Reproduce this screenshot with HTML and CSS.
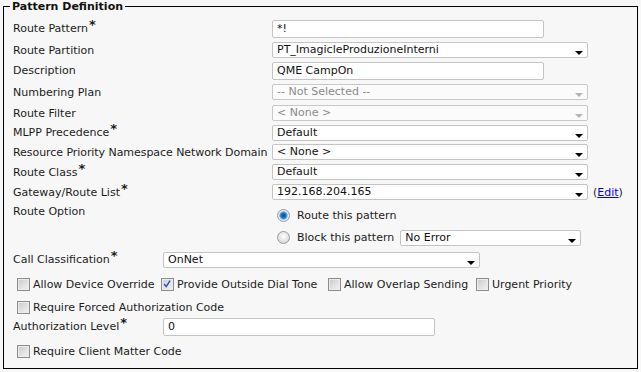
FILE: index.html
```html
<!DOCTYPE html>
<html>
<head>
<meta charset="utf-8">
<link rel="stylesheet" href="styles.css">
</head>
<body>
<fieldset class="pattern">
  <legend>Pattern Definition</legend>
  <div class="content">
    <div class="main">
      <div class="lbl">Route Pattern<span class="req">*</span></div>
      <div class="cell"><span class="txt w272">*!</span></div>

      <div class="lbl">Route Partition</div>
      <div class="cell"><span class="sel w316">PT_ImagicleProduzioneInterni</span></div>

      <div class="lbl">Description</div>
      <div class="cell"><span class="txt w272">QME CampOn</span></div>

      <div class="lbl">Numbering Plan</div>
      <div class="cell"><span class="sel w316 dis">-- Not Selected --</span></div>

      <div class="lbl">Route Filter</div>
      <div class="cell"><span class="sel w316 dis">&lt; None &gt;</span></div>

      <div class="lbl">MLPP Precedence<span class="req">*</span></div>
      <div class="cell"><span class="sel w316">Default</span></div>

      <div class="lbl tight">Resource Priority Namespace Network Domain</div>
      <div class="cell"><span class="sel w316">&lt; None &gt;</span></div>

      <div class="lbl">Route Class<span class="req">*</span></div>
      <div class="cell"><span class="sel w316">Default</span></div>

      <div class="lbl">Gateway/Route List<span class="req">*</span></div>
      <div class="cell"><span class="sel w316">192.168.204.165</span><span class="edit">(<a href="#">Edit</a>)</span></div>
    </div>

    <div class="options">
      <div class="lbl top">Route Option</div>
      <div class="radios">
        <div class="ropt r1"><span class="radio on"></span><span class="rtext">Route this pattern</span></div>
        <div class="ropt r2"><span class="radio"></span><span class="rtext">Block this pattern</span><span class="sel w181">No Error</span></div>
      </div>
    </div>

    <div class="lower">
      <div class="lbl">Call Classification<span class="req">*</span></div>
      <div class="cell"><span class="sel w317">OnNet</span></div>
    </div>

    <div class="checks">
      <div class="chk"><span class="cb"></span>Allow Device Override</div>
      <div class="chk"><span class="cb on"><svg viewBox="0 0 13 13" width="11" height="11"><path d="M2.5 6 L5 9 L9.5 2" fill="none" stroke="#2b4fa8" stroke-width="1.7"/></svg></span>Provide Outside Dial Tone</div>
      <div class="chk"><span class="cb"></span>Allow Overlap Sending</div>
      <div class="chk"><span class="cb"></span>Urgent Priority</div>
    </div>

    <div class="single s1"><div class="chk"><span class="cb"></span>Require Forced Authorization Code</div></div>

    <div class="lower auth">
      <div class="lbl">Authorization Level<span class="req">*</span></div>
      <div class="cell"><span class="txt w272">0</span></div>
    </div>

    <div class="single s2"><div class="chk"><span class="cb"></span>Require Client Matter Code</div></div>
  </div>
</fieldset>
</body>
</html>
```

FILE: styles.css
```css
html, body {
  margin: 0;
  background: #f7f7f7;
}
body {
  font-family: "DejaVu Sans", Verdana, sans-serif;
  font-size: 11px;
  color: #1c1c1c;
  line-height: 13px;
}
.pattern {
  margin: 0 3px;
  padding: 0 0 3px 0;
  border: 1px solid #000;
  min-width: 0;
}
.pattern legend {
  font-weight: bold;
  padding: 0 2px;
  margin-left: 6px;
  line-height: 13px;
  color: #111;
}
.content {
  padding: 4px 0 0 9px;
}
.main {
  display: grid;
  grid-template-columns: 259px auto;
  grid-template-rows: 23px 20px 21px 22px 20px 19px 20px 20px 20px;
  align-items: center;
}
.lbl {
  white-space: nowrap;
}
.lbl.tight {
  letter-spacing: -0.06px;
}
.req {
  font-weight: bold;
  font-size: 13px;
  vertical-align: 3px;
  line-height: 0;
  margin-left: 1px;
}
.cell {
  display: flex;
  align-items: center;
}
.txt, .sel {
  box-sizing: border-box;
  display: block;
  background: #fff;
  border: 1px solid #c4c4c4;
  border-radius: 2px;
  padding: 0 4px;
  white-space: nowrap;
  color: #111;
}
.txt {
  height: 18px;
  line-height: 16px;
}
.sel {
  height: 16px;
  line-height: 14px;
  position: relative;
}
.sel::after {
  content: "";
  position: absolute;
  right: 4px;
  top: 8px;
  border-left: 4px solid transparent;
  border-right: 4px solid transparent;
  border-top: 4px solid #000;
}
.sel.dis {
  color: #8a8a8a;
  background: #fbfbfb;
  border-color: #c8c8c8;
}
.sel.dis::after {
  border-top-color: #b5b5b5;
}
.w272 { width: 272px; }
.w316 { width: 316px; }
.w317 { width: 317px; }
.w181 { width: 181px; }
.edit {
  margin-left: 5px;
  color: #1c1c1c;
}
.edit a {
  color: #0000ee;
  text-decoration: underline;
}
.options {
  display: grid;
  grid-template-columns: 259px auto;
}
.lbl.top {
  padding-top: 3px;
}
.radios {
  padding-left: 5px;
}
.ropt {
  display: flex;
  align-items: center;
  box-sizing: border-box;
}
.ropt.r1 { height: 23px; padding-top: 3px; }
.ropt.r2 { height: 24px; padding-top: 1px; }
.radio {
  width: 13px;
  height: 13px;
  box-sizing: border-box;
  border-radius: 50%;
  border: 1px solid #9a9a9a;
  background: radial-gradient(circle at 50% 40%, #ffffff 0, #e6e6e6 50%, #c9c9c9 100%);
  flex: none;
}
.radio.on {
  background: radial-gradient(circle at 50% 50%, #0b4f8a 0, #1d77bf 2.5px, #5aa3dc 3.5px, #d6e6f3 4.5px, #f4f8fb 6px);
}
.rtext {
  margin-left: 7px;
  margin-right: 6px;
}
.lower {
  display: grid;
  grid-template-columns: 150px auto;
  grid-template-rows: 21px;
  align-items: center;
}
.lower.auth {
  grid-template-rows: 19px;
}
.checks {
  display: grid;
  grid-template-columns: 144px 167px 148px auto;
  height: 28px;
  padding-top: 1px;
  box-sizing: border-box;
  align-items: center;
  padding-left: 4px;
}
.chk {
  display: flex;
  align-items: center;
  white-space: nowrap;
}
.cb {
  width: 13px;
  height: 13px;
  box-sizing: border-box;
  border: 1px solid #8c8c8c;
  background: linear-gradient(135deg, #c9c9c9 0%, #e4e4e4 60%, #f0f0f0 100%);
  box-shadow: inset 0 0 0 1px #ececec;
  margin-right: 3px;
  flex: none;
  display: flex;
  align-items: center;
  justify-content: center;
}
.cb.on {
  background: linear-gradient(135deg, #c7cde0 0%, #e2e6f0 60%, #f0f2f8 100%);
}
.cb svg {
  display: block;
}
.single {
  display: flex;
  align-items: center;
  padding-left: 4px;
  box-sizing: border-box;
}
.single.s1 { height: 19px; }
.single.s2 { height: 29px; padding-top: 2px; padding-bottom: 1px; }
```
